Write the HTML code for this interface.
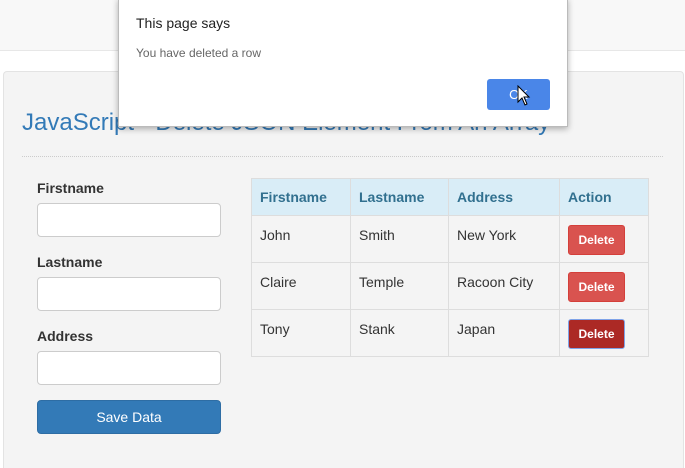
<!DOCTYPE html>
<html><head><style>
html,body{margin:0;width:685px;height:468px;overflow:hidden}
body{background:#fff;font-family:"Liberation Sans",Arial,sans-serif;position:relative;font-size:14px;color:#333}
.nav{position:absolute;left:0;top:0;width:685px;height:50px;background:#f8f8f8;border-bottom:1px solid #e7e7e7}
.well{position:absolute;left:3px;top:71px;width:679px;height:397px;background:#f4f4f4;border:1px solid #e3e3e3;border-bottom:none;border-radius:4px 4px 0 0}
h3{position:absolute;left:22px;top:109px;margin:0;font-weight:normal;font-size:24px;color:#337ab7}
.hr{position:absolute;left:22px;top:156px;width:641px;border-top:1px dotted #ccc}
label{position:absolute;left:37px;font-weight:bold;font-size:14px}
.in{position:absolute;left:37px;width:182px;height:32px;background:#fff;border:1px solid #ccc;border-radius:4px}
.save{position:absolute;left:37px;top:400px;width:182px;height:32px;background:#337ab7;border:1px solid #2e6da4;border-radius:4px;color:#fff;text-align:center;line-height:32px;font-size:14px}
table{position:absolute;left:251px;top:178px;border-collapse:collapse}
td,th{border:1px solid #ddd;text-align:left;padding:0 8px;vertical-align:top}
th{background:#d9edf7;color:#31708f;height:36px;vertical-align:middle}
td{height:47px;padding-top:11px;box-sizing:border-box}
.del{display:inline-block;width:55px;height:28px;background:#d9534f;border:1px solid #d43f3a;border-radius:3px;color:#fff;font-size:12px;font-weight:bold;text-align:center;line-height:28px;margin-top:-2px}
.dlg{position:absolute;left:118px;top:-2px;width:448px;height:127px;background:#fff;border:1px solid #bbb;box-shadow:0 2px 6px rgba(0,0,0,.3)}
.ok{position:absolute;left:368px;top:80px;width:63px;height:31px;background:#4a86e8;border-radius:3px;color:#fff;text-align:center;line-height:31px;font-size:13px}
</style></head><body>
<div class="nav"></div>
<div class="well"></div>
<h3>JavaScript - Delete JSON Element From An Array</h3>
<div class="hr"></div>
<label style="top:180px">Firstname</label><div class="in" style="top:203px"></div>
<label style="top:254px">Lastname</label><div class="in" style="top:277px"></div>
<label style="top:328px">Address</label><div class="in" style="top:351px"></div>
<div class="save">Save Data</div>
<table>
<tr><th style="width:82px">Firstname</th><th style="width:81px">Lastname</th><th style="width:94px">Address</th><th style="width:72px">Action</th></tr>
<tr><td>John</td><td>Smith</td><td>New York</td><td><span class="del">Delete</span></td></tr>
<tr><td>Claire</td><td>Temple</td><td>Racoon City</td><td><span class="del">Delete</span></td></tr>
<tr><td>Tony</td><td>Stank</td><td>Japan</td><td><span class="del" style="background:#ac2925;border-color:#7fa3e8">Delete</span></td></tr>
</table>
<div class="dlg">
<div style="position:absolute;left:17px;top:16px;font-size:14px;color:#222">This page says</div>
<div style="position:absolute;left:17px;top:47px;font-size:12px;color:#666">You have deleted a row</div>
<div class="ok">OK</div>
<svg style="position:absolute;left:398px;top:86px" width="14" height="22" viewBox="0 0 14 22"><path d="M1 1 L1 17 L5 13 L8 20 L10 19 L7 12 L12 12 Z" fill="#fff" stroke="#000" stroke-width="1"/></svg>
</div>
</body></html>
